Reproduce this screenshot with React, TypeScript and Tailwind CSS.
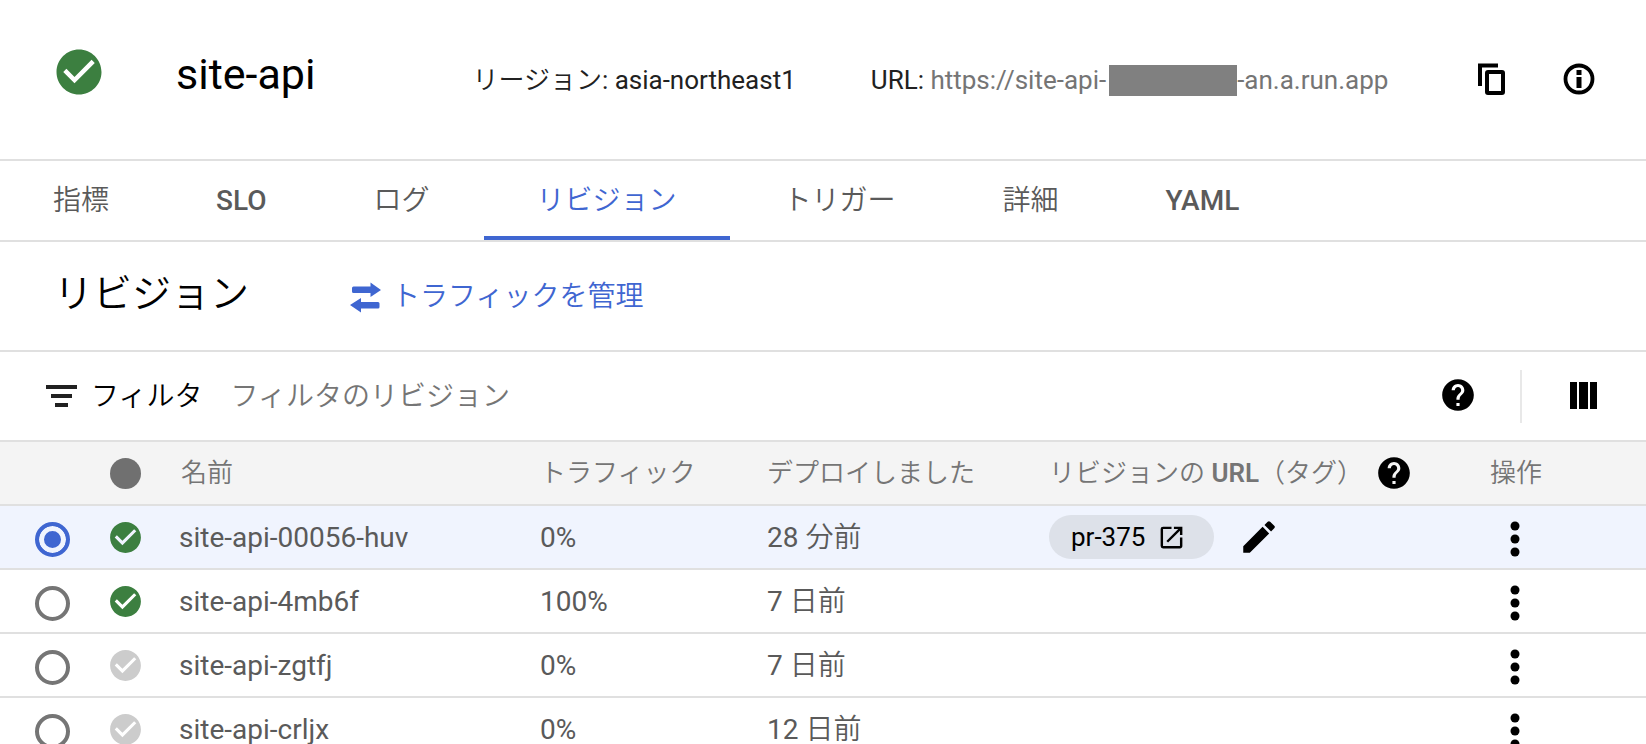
import type { ReactNode } from "react";
import { MdCheckCircle, MdEdit, MdHelp, MdOpenInNew } from "react-icons/md";

const tabs = ["指標", "SLO", "ログ", "リビジョン", "トリガー", "詳細", "YAML"];

const revisions = [
  { name: "site-api-00056-huv", traffic: "0%", deployed: "28 分前", active: true, tag: "pr-375" },
  { name: "site-api-4mb6f", traffic: "100%", deployed: "7 日前", active: true },
  { name: "site-api-zgtfj", traffic: "0%", deployed: "7 日前", active: false },
  { name: "site-api-crljx", traffic: "0%", deployed: "12 日前", active: false },
];

function IconCopy() {
  return (
    <svg viewBox="0 0 27 32" className="w-[27px] h-[32px]" fill="none" stroke="currentColor" strokeWidth="4">
      <path d="M2 23V2.5h18" />
      <rect x="9" y="9" width="16" height="21" rx="1" />
    </svg>
  );
}

function IconInfo() {
  return (
    <svg viewBox="0 0 32 32" className="size-8" fill="none" stroke="currentColor" strokeWidth="5">
      <circle cx="16" cy="16" r="13.5" strokeWidth="3.8" />
      <path d="M16 14v11M16 7v5" />
    </svg>
  );
}

function IconTraffic() {
  return (
    <svg viewBox="0 0 32 32" className="size-8" fill="currentColor">
      <path d="M3.5 5.5h17v-4L31 9l-10.5 7v-4h-17A1.500 1.500 0 0 1 2 10.500V7a1.500 1.500 0 0 1 1.500-1.500zM28 27.500H11v4L0 24l11-7v4h17a1.500 1.500 0 0 1 1.500 1.500V26a1.500 1.500 0 0 1-1.500 1.500z" />
    </svg>
  );
}

function IconFilter() {
  return (
    <svg viewBox="0 0 31 22" className="w-[31px] h-[22px]" fill="currentColor">
      <path d="M0 0h31v4H0zM5 9h21v4H5zM9 18h13v4H9z" />
    </svg>
  );
}

function IconColumns() {
  return (
    <svg viewBox="0 0 27 27" className="size-[27px]" fill="currentColor">
      <path d="M0 0h7v27H0zM9 0h9v27H9zM20 0h7v27h-7z" />
    </svg>
  );
}

function IconMore() {
  return (
    <svg viewBox="0 0 10 36" className="w-[10px] h-9" fill="currentColor">
      <circle cx="5" cy="5" r="4.5" />
      <circle cx="5" cy="18" r="4.5" />
      <circle cx="5" cy="31" r="4.5" />
    </svg>
  );
}

function HeadCell({ children }: { children?: ReactNode }) {
  return <th className="p-0 text-left text-[26px] font-normal text-[#757575] whitespace-nowrap">{children}</th>;
}

export default function App() {
  return (
    <div className="h-screen overflow-hidden bg-white text-black font-['Roboto','Noto_Sans_CJK_JP_DemiLight','Noto_Sans_CJK_JP_Light','Noto_Sans_CJK_JP',sans-serif]">
      <header className="flex items-center h-[161px] border-b-2 border-[#e0e0e0] pl-[52px] pr-[51px]">
        <MdCheckCircle className="size-[54px] shrink-0 text-[#3c7f40] mb-4" />
        <h1 className="ml-[70px] text-[43px] leading-[50px] mb-3">site-api</h1>
        <p className="ml-[157px] pt-0.5 text-[26px] text-[#212121] whitespace-nowrap">リージョン: asia-northeast1</p>
        <p className="ml-[75px] pt-0.5 flex items-center text-[26px] text-[#212121] whitespace-nowrap">
          URL:&nbsp;
          <a href="#" className="flex items-center text-[#757575]">
            https://site-api-
            <span className="ml-[3px] w-[128px] h-[31px] bg-[#808080]" />
            -an.a.run.app
          </a>
        </p>
        <button aria-label="コピー" className="ml-auto pb-0.5"><IconCopy /></button>
        <button aria-label="情報" className="ml-[58px] pb-0.5"><IconInfo /></button>
      </header>

      <nav className="flex gap-px h-[81px] border-b-2 border-[#e0e0e0] text-[28px] text-[#5a5a5a]">
        {tabs.map((tab) => (
          <a
            key={tab}
            href="#"
            className={`flex items-center px-[53px] pt-1 border-b-4 ${/[A-Z]/.test(tab) ? "font-medium" : ""} ${tab === "リビジョン" ? "border-[#3f66d1] text-[#3f66d1]" : "border-transparent"}`}
          >
            {tab}
          </a>
        ))}
      </nav>

      <section className="flex items-center h-[110px] border-b-2 border-[#e0e0e0] pl-[54px]">
        <h2 className="text-[39px] mb-1">リビジョン</h2>
        <button className="ml-[101px] pt-0.5 flex items-center gap-2.5 text-[28px] text-[#3f66d1]">
          <IconTraffic />
          トラフィックを管理
        </button>
      </section>

      <div className="flex items-center h-[90px] border-b-2 border-[#e0e0e0] pl-[46px] pr-[49px]">
        <span className="text-[#212121]"><IconFilter /></span>
        <label htmlFor="filter" className="ml-3.5 pt-0.5 text-[28px]">フィルタ</label>
        <input id="filter" placeholder="フィルタのリビジョン" className="ml-7 pt-0.5 flex-1 text-[28px] outline-none placeholder:text-[#757575]" />
        <button aria-label="ヘルプ" className="pb-0.5"><MdHelp className="size-[38px]" /></button>
        <span className="ml-[43px] w-[2px] h-[53px] bg-[#e8e8e8]" />
        <button aria-label="列の表示" className="ml-12 pb-0.5"><IconColumns /></button>
      </div>

      <table className="w-full table-fixed border-collapse">
        <colgroup>
          <col className="w-[107px]" />
          <col className="w-[72px]" />
          <col className="w-[361px]" />
          <col className="w-[227px]" />
          <col className="w-[282px]" />
          <col />
          <col className="w-[156px]" />
        </colgroup>
        <thead>
          <tr className="h-[63px] bg-[#f4f4f4] border-b-2 border-[#e0e0e0]">
            <HeadCell />
            <HeadCell><span className="ml-[3px] block size-[31px] rounded-full bg-[#707070]" /></HeadCell>
            <HeadCell><span className="pl-0.5">名前</span></HeadCell>
            <HeadCell>トラフィック</HeadCell>
            <HeadCell>デプロイしました</HeadCell>
            <HeadCell>
              <span className="flex items-center gap-3">
                <span>リビジョンの <b className="font-semibold">URL</b>（タグ）</span>
                <MdHelp className="size-[38px] text-black" />
              </span>
            </HeadCell>
            <HeadCell>操作</HeadCell>
          </tr>
        </thead>
        <tbody>
          {revisions.map((rev) => (
            <tr key={rev.name} className="h-16 border-b-2 border-[#e0e0e0] text-[28px] text-[#5a5a5a] has-checked:bg-[#f0f4fe]">
              <td className="p-0 pl-[35px]">
                <input
                  type="radio"
                  name="revision"
                  aria-label={rev.name}
                  defaultChecked={rev.tag !== undefined}
                  className="block mt-1 size-[35px] appearance-none rounded-full border-4 border-[#757575] checked:border-[#3f66d1] checked:bg-[#3f66d1] checked:shadow-[inset_0_0_0_5px_#f0f4fe]"
                />
              </td>
              <td className="p-0">
                <MdCheckCircle className={`size-[37px] ${rev.active ? "text-[#3c7f40]" : "text-[#cccccc]"}`} />
              </td>
              <td className="p-0 pt-0.5">{rev.name}</td>
              <td className="p-0 pt-0.5">{rev.traffic}</td>
              <td className="p-0 pt-0.5">{rev.deployed}</td>
              <td className="p-0">
                {rev.tag && (
                  <div className="flex items-center gap-6">
                    <a href="#" className="flex items-center gap-3 h-11 rounded-full bg-[#dde1e9] pl-[22px] pr-7 text-[26px] text-black">
                      {rev.tag}
                      <MdOpenInNew className="size-[29px]" />
                    </a>
                    <button aria-label="タグを編集"><MdEdit className="size-[42px] text-black" /></button>
                  </div>
                )}
              </td>
              <td className="p-0 pl-5">
                <button aria-label="操作メニュー" className="block pt-1 text-black"><IconMore /></button>
              </td>
            </tr>
          ))}
        </tbody>
      </table>
    </div>
  );
}
